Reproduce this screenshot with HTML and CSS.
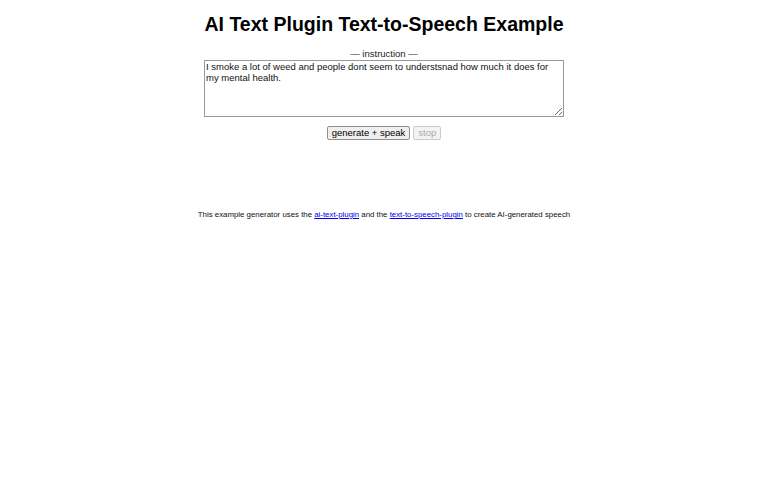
FILE: index.html
```html
<!DOCTYPE html>
<html lang="en">
<head>
    <meta charset="UTF-8">
    <meta name="viewport" content="width=device-width, initial-scale=1.0">
    <title>AI Text Plugin Text-to-Speech Example</title>
    <link rel="stylesheet" href="styles.css">
</head>
<body>
    <div class="container">
        <h1>AI Text Plugin Text-to-Speech Example</h1>

        <div class="instruction">
            <div class="label">— instruction —</div>
            <textarea id="instruction">I smoke a lot of weed and people dont seem to understsnad how much it does for my mental health.</textarea>
        </div>

        <div class="controls">
            <button id="generate">generate + speak</button>
            <button id="stop" disabled>stop</button>
        </div>

        <div id="output" class="output"></div>

        <p class="note">This example generator uses the <a href="#">ai-text-plugin</a> and the <a href="#">text-to-speech-plugin</a> to create AI-generated speech</p>
    </div>
</body>
</html>
```

FILE: styles.css
```css
body {
    font-family: "Liberation Sans", Arial, sans-serif;
    margin: 8px;
    background: #fff;
    color: #000;
}
.container {
    display: flex;
    flex-direction: column;
    align-items: center;
}
h1 {
    font-size: 19.5px;
    font-weight: bold;
    margin: 5px 0 11px;
}
.instruction {
    display: flex;
    flex-direction: column;
    align-items: center;
}
.label {
    font-size: 9.5px;
    line-height: 13px;
    color: #222;
}
textarea {
    box-sizing: border-box;
    width: 360px;
    height: 57px;
    font-family: "Liberation Sans", Arial, sans-serif;
    font-size: 9.5px;
    line-height: 11px;
    padding: 0 3px 1px 1px;
    border: 1px solid #999;
    margin: 0;
    color: #111;
}
.controls {
    display: flex;
    gap: 3px;
    margin-top: 9px;
}
button {
    font-family: "Liberation Sans", Arial, sans-serif;
    font-size: 9.5px;
    height: 14px;
    padding: 0 4px;
    line-height: 12px;
    border: 1px solid #8f8f8f;
    border-radius: 2px;
    background: #efefef;
    color: #000;
}
button:disabled {
    color: #aaa;
    border-color: #ccc;
    background: #f3f3f3;
}
.output {
    height: 62px;
}
.note {
    font-size: 7.85px;
    margin: 8px 0;
    color: #111;
}
.note a {
    color: #0000ee;
}
```
